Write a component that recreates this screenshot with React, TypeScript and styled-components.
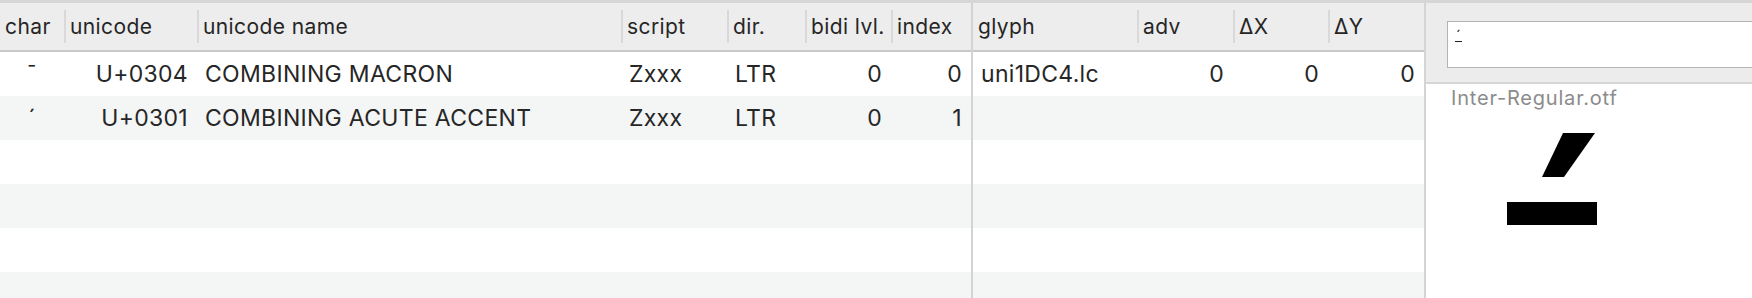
import styled, { createGlobalStyle } from 'styled-components';

const GlobalStyle = createGlobalStyle`
    html, body {
        margin: 0;
        padding: 0;
        background: #ffffff;
    }
`

const SPage = styled.div`
    display: flex;
    flex-direction: column;
    width: 1752px;
    height: 298px;
    overflow: hidden;
    background: #ffffff;
    font-family: Inter, 'Liberation Sans', sans-serif;
    color: #262626;
`

const STopStrip = styled.div`
    height: 3px;
    flex-shrink: 0;
    background: #d6d6d6;
`

const SMain = styled.div`
    display: flex;
    flex: 1;
    min-height: 0;
`

const STables = styled.div`
    display: flex;
    width: 1424px;
    flex-shrink: 0;
`

const STable = styled.div<{ $width: number; $divider?: boolean }>`
    display: flex;
    flex-direction: column;
    width: ${p => p.$width}px;
    overflow: hidden;
    box-sizing: border-box;
    border-left: ${p => (p.$divider ? '2px solid #d3d3d3' : 'none')};
`

const SHeaderRow = styled.div<{ $cols: string }>`
    display: grid;
    grid-template-columns: ${p => p.$cols};
    flex-shrink: 0;
    height: 47px;
    align-items: center;
    background: #ededed;
    border-bottom: 2px solid #c9c9c9;
`

const SHeaderCell = styled.div<{ $first?: boolean }>`
    display: flex;
    align-items: center;
    height: 33px;
    padding-left: ${p => (p.$first ? '5px' : '4px')};
    border-left: ${p => (p.$first ? 'none' : '2px solid #d9d9d9')};
    font-size: 21px;
    letter-spacing: 0.4px;
    white-space: nowrap;
    overflow: hidden;
`

const SRow = styled.div<{ $cols: string; $odd: boolean }>`
    display: grid;
    grid-template-columns: ${p => p.$cols};
    flex-shrink: 0;
    height: 44px;
    align-items: center;
    background: ${p => (p.$odd ? '#f4f5f5' : '#ffffff')};
`

const SCell = styled.div<{ $align?: 'left' | 'right' | 'center' }>`
    padding: 0 9px 0 8px;
    text-align: ${p => p.$align ?? 'left'};
    font-size: 23px;
    letter-spacing: 0.3px;
    white-space: nowrap;
    overflow: hidden;
`

const SCharCell = styled(SCell)`
    padding: 0;
`

const SPanel = styled.div`
    display: flex;
    flex-direction: column;
    flex: 1;
    min-width: 0;
    overflow: hidden;
    border-left: 2px solid #d4d4d4;
`

const SPanelTop = styled.div`
    height: 81px;
    flex-shrink: 0;
    box-sizing: border-box;
    padding: 18px 0 0 21px;
    background: #ececec;
    border-bottom: 2px solid #d6d6d6;
`

const STextBox = styled.div`
    width: 360px;
    height: 47px;
    box-sizing: border-box;
    background: #ffffff;
    border: 1px solid #b4b4b4;
    padding: 3px 0 0 7px;
`

const SMark = styled.span`
    display: inline-block;
    font-size: 15px;
    line-height: 11px;
    color: #222;
    border-bottom: 1.5px solid #222;
    padding: 0 1px;
`

const SPanelBody = styled.div`
    display: flex;
    flex-direction: column;
    padding: 3px 0 0 25px;
`

const SFontName = styled.div`
    font-size: 20px;
    letter-spacing: 0.8px;
    line-height: 22px;
    color: #8b8b8b;
`

const SGlyph = styled.svg`
    display: block;
    margin: 24px 0 0 56px;
`

const shapingCols = '64px 133px 424px 106px 78px 86px 80px'
const glyphCols = '164px 96px 95px 96px'

const shapingHeads = ['char', 'unicode', 'unicode name', 'script', 'dir.', 'bidi lvl.', 'index']
const glyphHeads = ['glyph', 'adv', 'ΔX', 'ΔY']

const chars = [
    { ch: '¯', code: 'U+0304', name: 'COMBINING MACRON', script: 'Zxxx', dir: 'LTR', bidi: '0', index: '0' },
    { ch: '´', code: 'U+0301', name: 'COMBINING ACUTE ACCENT', script: 'Zxxx', dir: 'LTR', bidi: '0', index: '1' },
]

const glyphs = [
    { name: 'uni1DC4.lc', adv: '0', dx: '0', dy: '0' },
]

const ROWS = 6

export default function App() {
    return (
        <SPage>
            <GlobalStyle />
            <STopStrip />
            <SMain>
                <STables>
                    <STable $width={971}>
                        <SHeaderRow $cols={shapingCols}>
                            {shapingHeads.map((h, i) => (
                                <SHeaderCell key={h} $first={i === 0}>{h}</SHeaderCell>
                            ))}
                        </SHeaderRow>
                        {Array.from({ length: ROWS }).map((_, i) => {
                            const c = chars[i]
                            return (
                                <SRow key={i} $cols={shapingCols} $odd={i % 2 === 1}>
                                    {c && (
                                        <>
                                            <SCharCell $align="center">{c.ch}</SCharCell>
                                            <SCell $align="right">{c.code}</SCell>
                                            <SCell>{c.name}</SCell>
                                            <SCell>{c.script}</SCell>
                                            <SCell>{c.dir}</SCell>
                                            <SCell $align="right">{c.bidi}</SCell>
                                            <SCell $align="right">{c.index}</SCell>
                                        </>
                                    )}
                                </SRow>
                            )
                        })}
                    </STable>
                    <STable $width={453} $divider>
                        <SHeaderRow $cols={glyphCols}>
                            {glyphHeads.map((h, i) => (
                                <SHeaderCell key={h} $first={i === 0}>{h}</SHeaderCell>
                            ))}
                        </SHeaderRow>
                        {Array.from({ length: ROWS }).map((_, i) => {
                            const g = glyphs[i]
                            return (
                                <SRow key={i} $cols={glyphCols} $odd={i % 2 === 1}>
                                    {g && (
                                        <>
                                            <SCell>{g.name}</SCell>
                                            <SCell $align="right">{g.adv}</SCell>
                                            <SCell $align="right">{g.dx}</SCell>
                                            <SCell $align="right">{g.dy}</SCell>
                                        </>
                                    )}
                                </SRow>
                            )
                        })}
                    </STable>
                </STables>
                <SPanel>
                    <SPanelTop>
                        <STextBox>
                            <SMark>´</SMark>
                        </STextBox>
                    </SPanelTop>
                    <SPanelBody>
                        <SFontName>Inter-Regular.otf</SFontName>
                        <SGlyph width="90" height="92" viewBox="0 0 90 92">
                            <polygon points="56,0 88,0 57,44 35,44" fill="#000" />
                            <rect x="0" y="69" width="90" height="23" fill="#000" />
                        </SGlyph>
                    </SPanelBody>
                </SPanel>
            </SMain>
        </SPage>
    )
}
